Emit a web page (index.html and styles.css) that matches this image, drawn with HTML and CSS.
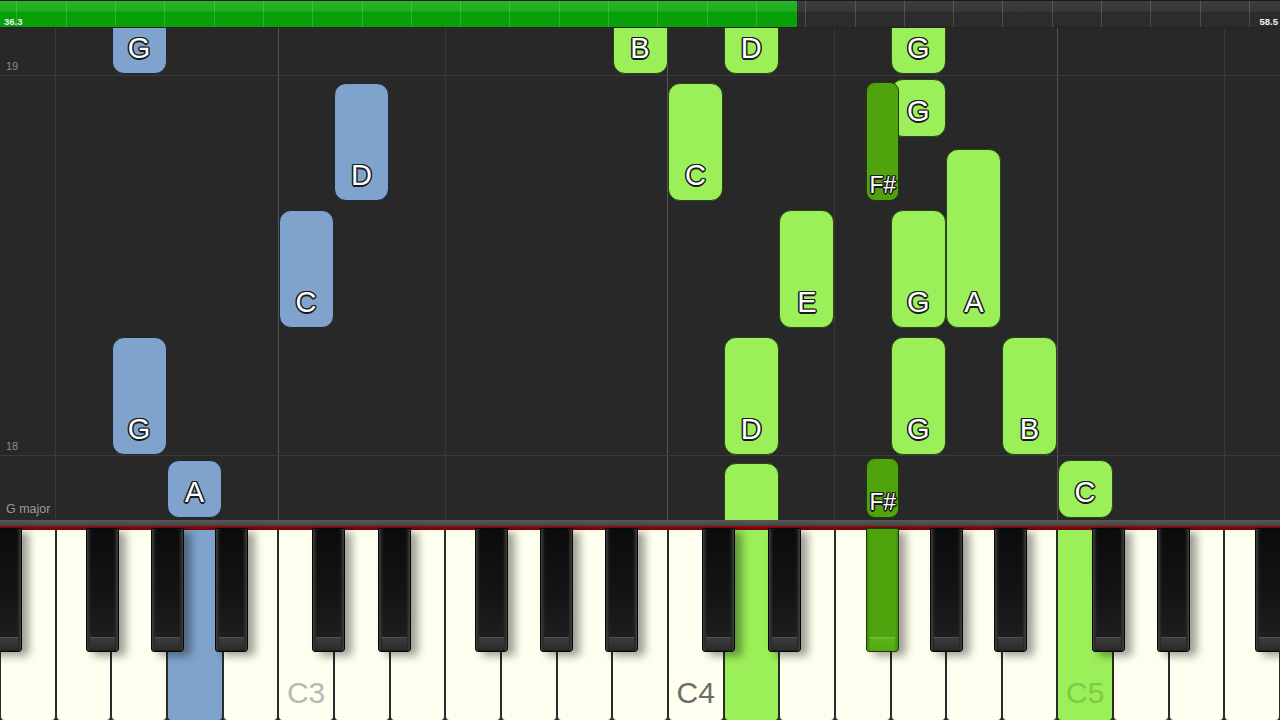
FILE: index.html
```html
<!DOCTYPE html>
<html>
<head>
<meta charset="utf-8">
<link rel="stylesheet" href="styles.css">
</head>
<body>
<div class="app">
  <div class="topbar">
    <div class="progress"><span class="time">36.3</span></div>
    <div class="rest"><span class="time">58.5</span></div>
  </div>

  <div class="roll">
    <div class="vline" style="left:55px"></div>
    <div class="vline c" style="left:278px"></div>
    <div class="vline" style="left:445px"></div>
    <div class="vline c" style="left:667px"></div>
    <div class="vline" style="left:834px"></div>
    <div class="vline c" style="left:1057px"></div>
    <div class="vline" style="left:1224px"></div>
    <div class="hline" style="top:47px"></div>
    <div class="hline" style="top:427px"></div>

    <span class="measure" style="top:33px">19</span>
    <span class="measure" style="top:413px">18</span>
    <span class="key-name">G major</span>

    <!-- left hand -->
    <div class="note blue" style="left:111.5px;top:-72px;width:55px;height:118px"><span>G</span></div>
    <div class="note blue" style="left:334px;top:55px;width:55px;height:118px"><span>D</span></div>
    <div class="note blue" style="left:278.5px;top:182px;width:55px;height:118px"><span>C</span></div>
    <div class="note blue" style="left:111.5px;top:309px;width:55px;height:118px"><span>G</span></div>
    <div class="note blue" style="left:167px;top:432px;width:55px;height:58px"><span>A</span></div>

    <!-- right hand -->
    <div class="note green" style="left:612.5px;top:-72px;width:55px;height:118px"><span>B</span></div>
    <div class="note green" style="left:723.7px;top:-72px;width:55px;height:118px"><span>D</span></div>
    <div class="note green" style="left:890.7px;top:-72px;width:55px;height:118px"><span>G</span></div>
    <div class="note green" style="left:890.7px;top:51px;width:55px;height:58px"><span>G</span></div>
    <div class="note green" style="left:668px;top:55px;width:55px;height:118px"><span>C</span></div>
    <div class="note sharp" style="left:866px;top:54px;width:33px;height:119px"><span>F#</span></div>
    <div class="note green" style="left:946.3px;top:121px;width:55px;height:179px"><span>A</span></div>
    <div class="note green" style="left:779.4px;top:182px;width:55px;height:118px"><span>E</span></div>
    <div class="note green" style="left:890.7px;top:182px;width:55px;height:118px"><span>G</span></div>
    <div class="note green" style="left:723.7px;top:309px;width:55px;height:118px"><span>D</span></div>
    <div class="note green" style="left:890.7px;top:309px;width:55px;height:118px"><span>G</span></div>
    <div class="note green" style="left:1002px;top:309px;width:55px;height:118px"><span>B</span></div>
    <div class="note green" style="left:723.7px;top:435px;width:55px;height:90px"><span></span></div>
    <div class="note sharp" style="left:866px;top:430px;width:33px;height:60px"><span>F#</span></div>
    <div class="note green" style="left:1057.6px;top:432px;width:55px;height:58px"><span>C</span></div>
  </div>

  <div class="keyboard">
    <div class="kb-rail"></div>
    <div class="kb-felt"></div>
    <div class="keys">
      <div class="white"></div>
      <div class="white"></div>
      <div class="white"></div>
      <div class="white on-blue"></div>
      <div class="white"></div>
      <div class="white"><span class="lbl c3">C3</span></div>
      <div class="white"></div>
      <div class="white"></div>
      <div class="white"></div>
      <div class="white"></div>
      <div class="white"></div>
      <div class="white"></div>
      <div class="white"><span class="lbl c4">C4</span></div>
      <div class="white on-green"></div>
      <div class="white"></div>
      <div class="white"></div>
      <div class="white"></div>
      <div class="white"></div>
      <div class="white"></div>
      <div class="white on-green"><span class="lbl c5">C5</span></div>
      <div class="white"></div>
      <div class="white"></div>
      <div class="white"></div>

      <div class="black" style="left:-11.5px"></div>
      <div class="black" style="left:85.8px"></div>
      <div class="black" style="left:150.5px"></div>
      <div class="black" style="left:214.6px"></div>
      <div class="black" style="left:312.4px"></div>
      <div class="black" style="left:378.1px"></div>
      <div class="black" style="left:475.4px"></div>
      <div class="black" style="left:540px"></div>
      <div class="black" style="left:604.7px"></div>
      <div class="black" style="left:702px"></div>
      <div class="black" style="left:767.6px"></div>
      <div class="black on-sharp" style="left:865.5px"></div>
      <div class="black" style="left:929.6px"></div>
      <div class="black" style="left:994.2px"></div>
      <div class="black" style="left:1091.5px"></div>
      <div class="black" style="left:1157.2px"></div>
      <div class="black" style="left:1254.5px"></div>
    </div>
  </div>
</div>
</body>
</html>
```
FILE: styles.css
```css
html, body {
  margin: 0;
  padding: 0;
  background: #282828;
  overflow: hidden;
}

body {
  font-family: "Liberation Sans", Arial, sans-serif;
}

.app {
  width: 1280px;
  height: 720px;
  display: flex;
  flex-direction: column;
}

/* ---------- top progress bar ---------- */
.topbar {
  position: relative;
  height: 28px;
  display: flex;
  flex-shrink: 0;
  border-top: 1px solid #1c1c1c;
  border-bottom: 1px solid #222222;
  box-sizing: border-box;
  z-index: 5;
}

.topbar::after {
  content: "";
  position: absolute;
  inset: 0;
  pointer-events: none;
  background: repeating-linear-gradient(90deg,
    transparent 0, transparent 16.5px,
    rgba(255,255,255,0.16) 16.5px, rgba(255,255,255,0.16) 17.5px,
    transparent 17.5px, transparent 49.3px);
}

.progress {
  width: 797px;
  display: flex;
  align-items: flex-end;
  background: linear-gradient(#2ab42a 0, #1caf1c 10px, #0a9f0a 11px, #08a008 100%);
}

.rest {
  flex: 1;
  display: flex;
  align-items: flex-end;
  justify-content: flex-end;
  background: linear-gradient(#3c3c3c 0, #383838 10px, #2d2d2d 11px, #2b2b2b 100%);
}

.time {
  font-size: 9.5px;
  font-weight: bold;
  color: #f2f2f2;
  line-height: 1;
  padding: 0 4px 1px 4px;
}

.rest .time {
  padding-right: 2px;
}

/* ---------- piano roll ---------- */
.roll {
  position: relative;
  height: 492px;
  flex-shrink: 0;
  overflow: hidden;
  background: #282828;
}

.vline {
  position: absolute;
  top: 0;
  bottom: 0;
  width: 1px;
  background: #373737;
}

.vline.c {
  background: #545454;
}

.hline {
  position: absolute;
  left: 0;
  right: 0;
  height: 1px;
  background: #3a3a3a;
}

.measure {
  position: absolute;
  left: 6px;
  font-size: 11px;
  line-height: 1;
  color: #8a8a8a;
}

.key-name {
  position: absolute;
  left: 6px;
  top: 475px;
  font-size: 12.5px;
  line-height: 1;
  color: #9a9a9a;
}

.note {
  position: absolute;
  box-sizing: border-box;
  border-radius: 12px;
  border: 1.5px solid #1d2530;
  display: flex;
  flex-direction: column;
  justify-content: flex-end;
  align-items: center;
  padding-bottom: 10px;
}

.note span {
  font-size: 29px;
  line-height: 1;
  color: #ffffff;
  text-shadow:
    -1.5px 0 #1a1a1a, 1.5px 0 #1a1a1a, 0 -1.5px #1a1a1a, 0 1.5px #1a1a1a,
    -1px -1px #1a1a1a, 1px -1px #1a1a1a, -1px 1px #1a1a1a, 1px 1px #1a1a1a;
}

.note.blue {
  background: #7fa3cc;
  border-color: #1e2632;
}

.note.green {
  background: #9bef58;
  border-color: #2a4618;
}

.note.sharp {
  background: #4fa40d;
  border-color: #203a0c;
  border-radius: 9px;
  padding-bottom: 3px;
  z-index: 2;
}

.note.sharp span {
  font-size: 23px;
  letter-spacing: -0.5px;
}

/* ---------- keyboard ---------- */
.keyboard {
  height: 200px;
  flex-shrink: 0;
  display: flex;
  flex-direction: column;
  background: #2a2a2a;
}

.kb-rail {
  height: 6px;
  background: linear-gradient(#5a5a5a, #444444);
}

.kb-felt {
  height: 4px;
  background: linear-gradient(#8c0d0d, #6a0606);
}

.keys {
  position: relative;
  flex: 1;
  display: flex;
  background: #2b2b2b;
}

.white {
  flex: 1;
  box-sizing: border-box;
  border-left: 1px solid #2b2b2b;
  border-right: 1px solid #2b2b2b;
  border-radius: 0 0 4px 4px;
  background: #fffff0;
  display: flex;
  flex-direction: column;
  justify-content: flex-end;
  align-items: center;
  padding-bottom: 12px;
}

.white.on-blue {
  background: #7fa3cc;
}

.white.on-green {
  background: #9bef58;
}

.lbl {
  font-size: 30px;
  line-height: 1;
}

.lbl.c3 { color: #b9b9b3; }
.lbl.c4 { color: #6c6c6a; }
.lbl.c5 { color: #7ccb45; }

.black {
  position: absolute;
  top: -2px;
  width: 33px;
  height: 124px;
  box-sizing: border-box;
  border: 1px solid #050505;
  border-radius: 0 0 3px 3px;
  background:
    linear-gradient(90deg, rgba(70,70,70,0.9) 0, rgba(40,40,40,0.4) 3px, transparent 5px, transparent calc(100% - 5px), rgba(40,40,40,0.4) calc(100% - 3px), rgba(70,70,70,0.9) 100%),
    linear-gradient(#0b0b0b 0, #151515 60%, #222222 100%);
  box-shadow: 7px 4px 9px rgba(0, 0, 0, 0.38);
  z-index: 2;
}

.black::after {
  content: "";
  position: absolute;
  left: 3px;
  right: 3px;
  bottom: 1px;
  height: 13px;
  border-radius: 0 0 3px 3px;
  background: linear-gradient(#5a5a5a 0, #3c3c3c 1.5px, #323232 60%, #2a2a2a 100%);
}

.black.on-sharp {
  background:
    linear-gradient(90deg, #3f8a0a 0, #4fa40d 3px, #4ea30c 50%, #4fa40d calc(100% - 3px), #3f8a0a 100%);
  border-color: #1d3a08;
}

.black.on-sharp::after {
  background: linear-gradient(#7ac94a 0, #5bb21a 2px, #55aa14 100%);
}
```
